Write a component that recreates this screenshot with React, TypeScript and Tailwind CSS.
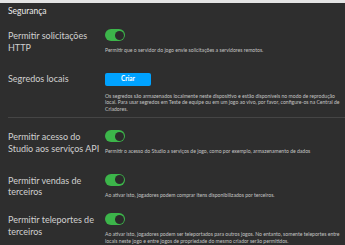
import React from "react";

function Toggle() {
  return (
    <div className="w-[20px] h-[12px] rounded-full bg-[#3cb54a] flex items-center justify-end pr-[1.5px]">
      <div className="w-[9px] h-[9px] rounded-full bg-[#2b2b2b]" />
    </div>
  );
}

function ToggleRow({ label, desc, mt }: { label: React.ReactNode; desc: React.ReactNode; mt: string }) {
  return (
    <div className={`flex ${mt}`}>
      <div className="w-[105px] shrink-0 pl-[8px] pr-[3px] text-[9px] leading-[11.5px] text-[#d0d0d0]">{label}</div>
      <div className="flex flex-col pr-[2px]">
        <div className="-mt-[1px]">
          <Toggle />
        </div>
        <div className="mt-[6px] text-[5.1px] leading-[6.5px] text-[#c4c4c4]">{desc}</div>
      </div>
    </div>
  );
}

export default function App() {
  return (
    <div className="w-[345px] h-[245px] bg-[#2e2e2e] overflow-hidden font-['Lato',sans-serif]">
      <div className="h-[3px] bg-[#e4e4e4]" />
      <div className="pl-[8px] pt-[2px] text-[8.5px] leading-[12px] text-[#ececec]">Segurança</div>
      <div className="flex mt-[13px]">
        <div className="w-[105px] shrink-0 pl-[8px] pr-[3px] text-[9px] leading-[11.5px] text-[#d0d0d0]">
          Permitir solicitações HTTP
        </div>
        <div className="flex flex-col pr-[2px]">
          <div className="-mt-[1px]">
            <Toggle />
          </div>
          <div className="mt-[6px] text-[5.1px] leading-[6.5px] text-[#c4c4c4]">
            Permitir que o servidor do jogo envie solicitações a servidores remotos.
          </div>
        </div>
      </div>
      <div className="flex mt-[19px]">
        <div className="w-[105px] shrink-0 pl-[8px] h-[13px] flex items-center text-[9px] leading-[11.5px] text-[#d0d0d0]">
          Segredos locais
        </div>
        <div className="flex flex-col pr-[2px]">
          <div className="w-[46px] h-[13px] rounded-[2px] bg-[#00a2ff] flex items-center justify-center text-[6.5px] font-bold text-white">
            Criar
          </div>
          <div className="mt-[7px] text-[5.1px] leading-[6.5px] text-[#c4c4c4]">
            Os segredos são armazenados localmente neste dispositivo e estão disponíveis no modo de reprodução
            local. Para usar segredos em Teste de equipe ou em um jogo ao vivo, por favor, configure-os na Central de
            Criadores.
          </div>
        </div>
      </div>
      <div className="ml-[8px] mt-[5px] h-px bg-[#454545]" />
      <ToggleRow
        mt="mt-[13px]"
        label="Permitir acesso do Studio aos serviços API"
        desc="Permitir o acesso do Studio a serviços de jogo, como por exemplo, armazenamento de dados"
      />
      <ToggleRow
        mt="mt-[20px]"
        label="Permitir vendas de terceiros"
        desc="Ao ativar isto, jogadores podem comprar itens disponibilizados por terceiros."
      />
      <ToggleRow
        mt="mt-[16px]"
        label="Permitir teleportes de terceiros"
        desc="Ao ativar isto, jogadores podem ser teleportados para outros jogos. No entanto, somente teleportes entre locais neste jogo e entre jogos de propriedade do mesmo criador serão permitidos."
      />
    </div>
  );
}
